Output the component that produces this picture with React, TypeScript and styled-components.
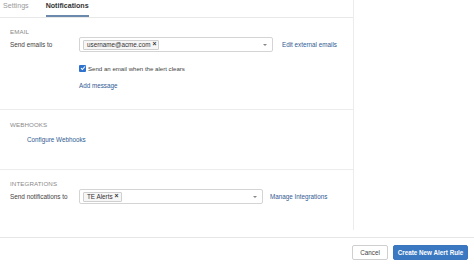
import React from "react";
import styled, { createGlobalStyle } from "styled-components";

const Global = createGlobalStyle`
  html, body { margin: 0; padding: 0; background: #fff; }
  body { font-family: "Liberation Sans", Arial, sans-serif; color: #333; }
  * { box-sizing: border-box; }
`;

const Page = styled.div`
  width: 474px;
  height: 264px;
  display: flex;
  flex-direction: column;
  overflow: hidden;
`;

const Content = styled.div`
  height: 237px;
  display: flex;
  align-items: flex-start;
`;

const Panel = styled.div`
  width: 354px;
  height: 230px;
  border-right: 1px solid #ececec;
  display: flex;
  flex-direction: column;
`;

const Tabs = styled.div`
  height: 18px;
  border-bottom: 1px solid #e8e8e8;
  display: flex;
  align-items: stretch;
  padding-left: 3px;
  gap: 17px;
`;

const Tab = styled.div<{ $active?: boolean }>`
  font-size: 7.1px;
  font-weight: ${(p) => (p.$active ? 700 : 400)};
  color: ${(p) => (p.$active ? "#333" : "#9a9a9a")};
  display: flex;
  align-items: center;
  padding-bottom: 3px;
  border-bottom: 2px solid ${(p) => (p.$active ? "#6a89ad" : "transparent")};
`;

const Section = styled.div<{ $h: number; $pt: number }>`
  height: ${(p) => p.$h}px;
  padding-top: ${(p) => p.$pt}px;
  padding-left: 10px;
  border-bottom: 1px solid #ececec;
  display: flex;
  flex-direction: column;
`;

const LastSection = styled(Section)`
  border-bottom: none;
`;

const Heading = styled.div`
  font-size: 6.2px;
  line-height: 8px;
  color: #8a8a8a;
  letter-spacing: 0.1px;
`;

const Row = styled.div`
  display: flex;
  align-items: center;
  margin-top: 1px;
`;

const Label = styled.div`
  width: 69px;
  font-size: 6.4px;
  color: #444;
`;

const Select = styled.div<{ $w: number }>`
  width: ${(p) => p.$w}px;
  height: 15px;
  border: 1px solid #d4d4d4;
  border-radius: 2px;
  display: flex;
  align-items: center;
  padding-left: 3px;
  position: relative;
`;

const Tag = styled.span`
  height: 10px;
  border: 1px solid #cfcfcf;
  background: #f6f6f6;
  border-radius: 1px;
  font-size: 6.3px;
  color: #333;
  display: inline-flex;
  align-items: center;
  gap: 2px;
  padding: 0 2px 0 3px;
  white-space: nowrap;
`;

const TagX = styled.span`
  font-size: 6.8px;
  font-weight: 700;
  color: #333;
  line-height: 1;
`;

const Arrow = styled.span`
  position: absolute;
  right: 5px;
  top: 6px;
  width: 0;
  height: 0;
  border-left: 2px solid transparent;
  border-right: 2px solid transparent;
  border-top: 2.5px solid #888;
`;

const Link = styled.a<{ $ml?: number }>`
  font-size: 6.3px;
  color: #2f5b93;
  text-decoration: none;
  margin-left: ${(p) => p.$ml ?? 0}px;
  white-space: nowrap;
`;

const CheckRow = styled.div`
  display: flex;
  align-items: center;
  margin-left: 69px;
  margin-top: 12px;
  gap: 2px;
  height: 8px;
`;

const Box = styled.span`
  width: 7px;
  height: 7px;
  background: #2f73cf;
  border-radius: 1px;
  display: inline-flex;
  align-items: center;
  justify-content: center;
`;

const CheckText = styled.span`
  font-size: 6.1px;
  color: #444;
`;

const SubLink = styled.div<{ $ml: number; $mt: number }>`
  margin-left: ${(p) => p.$ml}px;
  margin-top: ${(p) => p.$mt}px;
  line-height: 8px;
`;

const Footer = styled.div`
  flex: 1;
  border-top: 1px solid #e6e6e6;
  display: flex;
  justify-content: flex-end;
  align-items: flex-start;
  padding-top: 7px;
  padding-right: 6px;
  gap: 5px;
`;

const Button = styled.button<{ $primary?: boolean }>`
  height: 15px;
  padding: 0;
  width: ${(p) => (p.$primary ? 75 : 36)}px;
  font-family: inherit;
  font-size: 6.3px;
  border-radius: 2px;
  border: 1px solid ${(p) => (p.$primary ? "#3a76be" : "#cfcfcf")};
  background: ${(p) => (p.$primary ? "#3a78c2" : "#fff")};
  color: ${(p) => (p.$primary ? "#fff" : "#444")};
  font-weight: ${(p) => (p.$primary ? 700 : 400)};
`;

export default function App() {
  return (
    <Page>
      <Global />
      <Content>
        <Panel>
          <Tabs>
            <Tab>Settings</Tab>
            <Tab $active>Notifications</Tab>
          </Tabs>
          <Section $h={92} $pt={10}>
            <Heading>EMAIL</Heading>
            <Row>
              <Label>Send emails to</Label>
              <Select $w={194}>
                <Tag>
                  username@acme.com <TagX>×</TagX>
                </Tag>
                <Arrow />
              </Select>
              <Link $ml={9}>Edit external emails</Link>
            </Row>
            <CheckRow>
              <Box>
                <svg width="6" height="6" viewBox="0 0 6 6">
                  <path d="M1 3.1 L2.4 4.5 L5 1.5" stroke="#fff" strokeWidth="1.1" fill="none" />
                </svg>
              </Box>
              <CheckText>Send an email when the alert clears</CheckText>
            </CheckRow>
            <SubLink $ml={69} $mt={7}>
              <Link>Add message</Link>
            </SubLink>
          </Section>
          <Section $h={60} $pt={11}>
            <Heading>WEBHOOKS</Heading>
            <SubLink $ml={17} $mt={4}>
              <Link>Configure Webhooks</Link>
            </SubLink>
          </Section>
          <LastSection $h={59} $pt={10}>
            <Heading>INTEGRATIONS</Heading>
            <Row>
              <Label>Send notifications to</Label>
              <Select $w={184}>
                <Tag>
                  TE Alerts <TagX>×</TagX>
                </Tag>
                <Arrow />
              </Select>
              <Link $ml={7}>Manage Integrations</Link>
            </Row>
          </LastSection>
        </Panel>
      </Content>
      <Footer>
        <Button>Cancel</Button>
        <Button $primary>Create New Alert Rule</Button>
      </Footer>
    </Page>
  );
}
